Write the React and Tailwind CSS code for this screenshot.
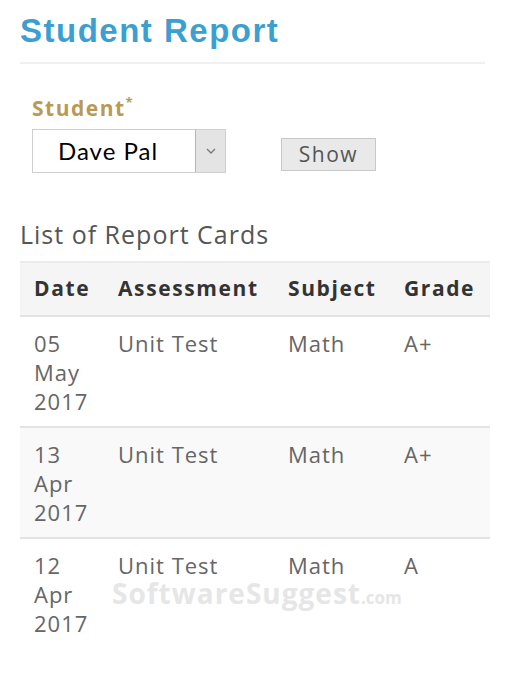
import React from "react";

const rows = [
  { d: ["05", "May", "2017"], a: "Unit Test", s: "Math", g: "A+", bg: "bg-white" },
  { d: ["13", "Apr", "2017"], a: "Unit Test", s: "Math", g: "A+", bg: "bg-[#f9f9f9]" },
  { d: ["12", "Apr", "2017"], a: "Unit Test", s: "Math", g: "A", bg: "bg-white" },
];

export default function App() {
  return (
    <div className="relative w-[508px] h-[673px] overflow-hidden bg-white font-['Open_Sans',sans-serif]">
      <div className="pl-[20px] pt-[13px]">
        <h1 className="font-['Liberation_Sans',Arial,sans-serif] font-bold text-[33px] leading-[36px] tracking-[1.5px] text-[#3c9fd2]">
          Student Report
        </h1>
      </div>
      <div className="mt-[13px] ml-[20px] w-[465px] h-[2px] bg-[#f0f0f0]" />

      <div className="pl-[32px] mt-[32px]">
        <div className="text-[21px] leading-[24px] font-bold tracking-[1.5px] text-[#b99a55]">
          Student<span className="align-top text-[13px] leading-[13px] tracking-normal">*</span>
        </div>
        <div className="flex items-start mt-[9px]">
          <div className="flex w-[194px] h-[44px] border border-[#cfcfcf] bg-white">
            <div className="flex-1 flex items-center pl-[25px] font-['Lato',sans-serif] text-[24px] tracking-[1px] text-black">
              Dave Pal
            </div>
            <div className="w-[30px] h-full bg-[#e4e4e4] border-l border-[#b5b5b5] flex items-center justify-center">
              <svg width="10" height="6" viewBox="0 0 10 6" fill="none">
                <path d="M1 1l4 4 4-4" stroke="#777" strokeWidth="1.3" />
              </svg>
            </div>
          </div>
          <button className="ml-[55px] mt-[9px] w-[95px] h-[33px] bg-[#e9e9e9] border border-[#c8c8c8] text-[21px] tracking-[1.5px] text-[#555] flex items-center justify-center">
            Show
          </button>
        </div>
      </div>

      <div className="pl-[20px] mt-[46px] text-[25px] leading-[30px] tracking-[1px] text-[#555]">
        List of Report Cards
      </div>

      <div className="ml-[20px] mt-[12px] w-[470px]">
        <div className="grid grid-cols-[84px_170px_116px_1fr] h-[56px] items-center bg-[#f5f5f5] border-t-2 border-[#ececec] border-b-2 border-b-[#e3e3e3] text-[21px] font-bold tracking-[1.6px] text-[#333]">
          <div className="pl-[14px]">Date</div>
          <div className="pl-[14px]">Assessment</div>
          <div className="pl-[14px]">Subject</div>
          <div className="pl-[14px]">Grade</div>
        </div>
        {rows.map((r, i) => (
          <div
            key={i}
            className={`grid grid-cols-[84px_170px_116px_1fr] pt-[12px] pb-[10px] text-[22px] leading-[29px] tracking-[1px] text-[#666] ${r.bg} ${i < 2 ? "border-b-2 border-[#e3e3e3]" : ""}`}
          >
            <div className="pl-[14px]">
              {r.d.map((x) => (
                <div key={x}>{x}</div>
              ))}
            </div>
            <div className="pl-[14px]">{r.a}</div>
            <div className="pl-[14px]">{r.s}</div>
            <div className="pl-[14px]">{r.g}</div>
          </div>
        ))}
      </div>

      <div className="absolute left-[112px] top-[576px] flex items-baseline font-['Open_Sans',sans-serif] font-bold text-[#e6e6e6]">
        <span className="text-[28px] leading-[34px] tracking-[1px]">SoftwareSuggest</span>
        <span className="text-[17px]">.com</span>
      </div>
    </div>
  );
}
